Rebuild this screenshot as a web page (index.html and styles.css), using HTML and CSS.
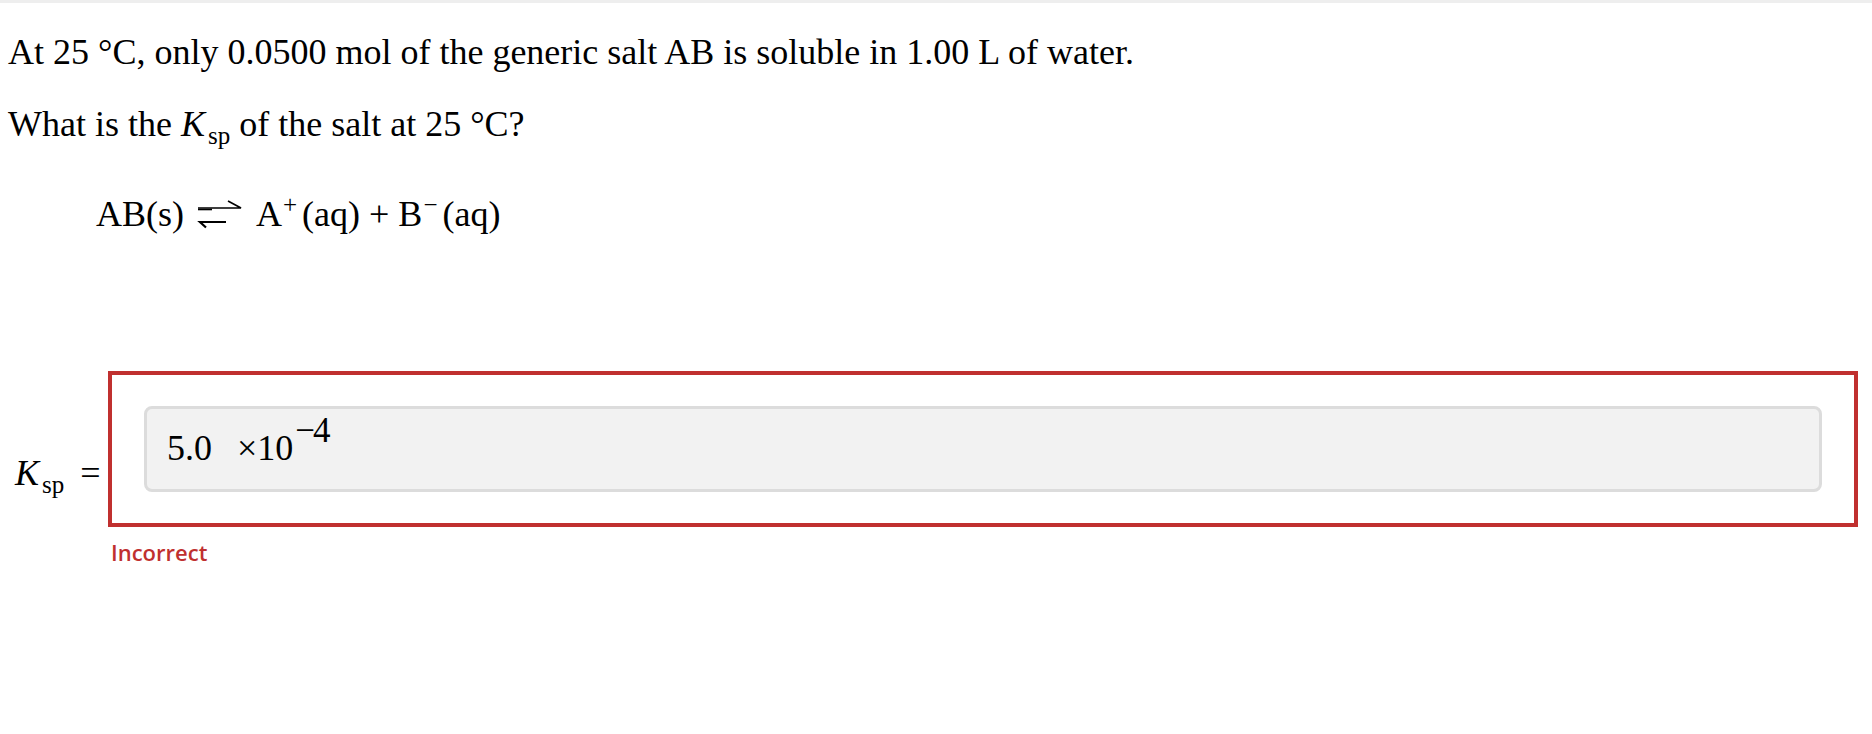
FILE: index.html
```html
<!DOCTYPE html>
<html lang="en">
<head>
<meta charset="utf-8">
<title>Ksp question</title>
<link rel="stylesheet" href="styles.css">
</head>
<body>
<div class="page">
  <p class="q q1">At 25 °C, only 0.0500 mol of the generic salt AB is soluble in 1.00 L of water.</p>
  <p class="q q2">What is the <i class="var">K</i><sub class="sub">sp</sub> of the salt at 25 °C?</p>
  <div class="eq">AB(s)<svg class="arrow" width="48" height="30" viewBox="0 0 48 30"><path d="M3 8 H46 L33 1" fill="none" stroke="#000" stroke-width="1.6" stroke-linejoin="miter"/><path d="M3 9.5 H17" stroke="#000" stroke-width="1.6"/><path d="M31 22 H5 L11 27.5" fill="none" stroke="#000" stroke-width="2.2"/></svg>A<sup class="ion">+</sup>(aq) + B<sup class="ion">−</sup>(aq)</div>
  <div class="answer-row">
    <div class="label"><i class="var">K</i><sub class="sub">sp</sub><span class="eqsign">=</span></div>
    <div class="answer-col">
      <div class="box">
        <div class="input"><span class="mant">5.0</span><span class="times">×10</span><sup class="exp">−4</sup></div>
      </div>
      <div class="feedback">Incorrect</div>
    </div>
  </div>
</div>
</body>
</html>
```
FILE: styles.css
```css
html, body {
  margin: 0;
  padding: 0;
}
body {
  font-family: "Liberation Serif", "Times New Roman", serif;
  color: #000;
  background: #fff;
  border-top: 3px solid #eeeeee;
}
.page {
  padding: 0 14px 0 8px;
}
.q {
  margin: 0;
  font-size: 36px;
  line-height: 40px;
}
.q1 { margin-top: 29px; }
.q2 { margin-top: 32px; }
.var { font-style: italic; }
.sub {
  font-size: 25px;
  line-height: 0;
  vertical-align: -8px;
  margin-left: 3px;
}
.eq {
  margin-top: 50px;
  padding-left: 88px;
  font-size: 36px;
  line-height: 40px;
}
.arrow {
  vertical-align: -4px;
  margin: 0 13px 0 11px;
}
.ion {
  font-size: 25px;
  line-height: 0;
  vertical-align: 13px;
  margin-left: 1px;
  margin-right: 5px;
}
.answer-row {
  display: flex;
  margin-top: 137px;
}
.label {
  width: 93px;
  padding-left: 7px;
  margin-top: 82px;
  font-size: 36px;
  line-height: 40px;
  height: 40px;
  white-space: nowrap;
}
.eqsign {
  margin-left: 16px;
}
.answer-col {
  flex: 1;
}
.box {
  border: 4px solid #c0302f;
  padding: 31px 32px;
}
.input {
  height: 86px;
  box-sizing: border-box;
  border: 3px solid #dcdcdc;
  border-radius: 8px;
  background: #f2f2f2;
  padding: 19px 20px 0;
  font-size: 36px;
  line-height: 40px;
  white-space: nowrap;
}
.times {
  margin-left: 25px;
}
.exp {
  font-size: 35px;
  line-height: 0;
  vertical-align: 18px;
  margin-left: 2px;
  letter-spacing: -2px;
}
.feedback {
  margin-top: 10px;
  padding-left: 3px;
  font-family: "Open Sans", "Liberation Sans", sans-serif;
  font-weight: 600;
  font-size: 22px;
  line-height: 30px;
  color: #c0302f;
}
```
